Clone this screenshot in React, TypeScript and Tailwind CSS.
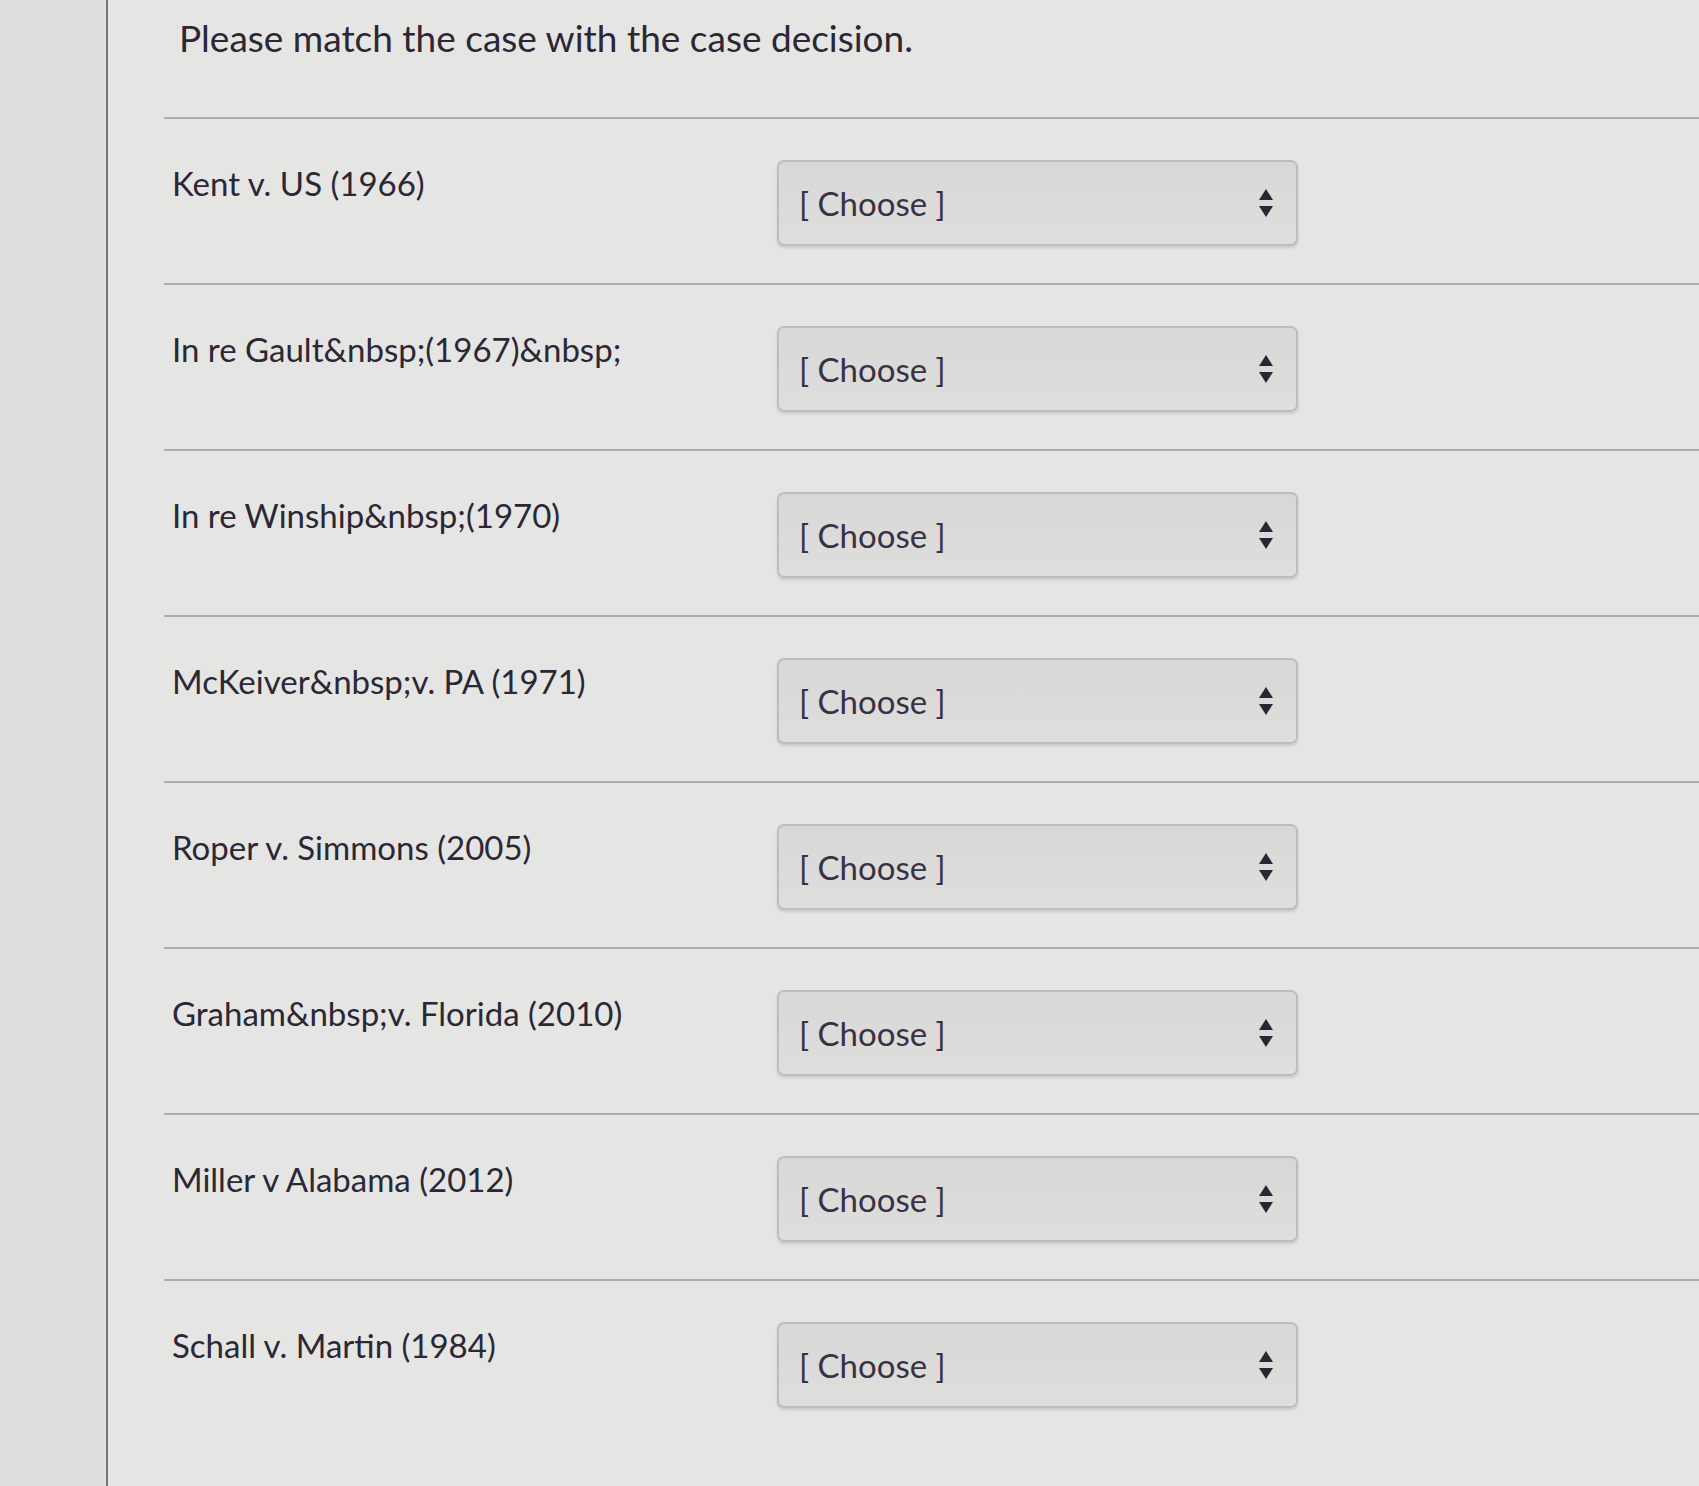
import React from "react";

const rows = [
  "Kent v. US (1966)",
  "In re Gault&nbsp;(1967)&nbsp;",
  "In re Winship&nbsp;(1970)",
  "McKeiver&nbsp;v. PA (1971)",
  "Roper v. Simmons (2005)",
  "Graham&nbsp;v. Florida (2010)",
  "Miller v Alabama (2012)",
  "Schall v. Martin (1984)",
];

function Arrows() {
  return (
    <svg width="16" height="30" viewBox="0 0 16 30" className="shrink-0">
      <path d="M8 1 L15 12 L1 12 Z" fill="#2a2734" />
      <path d="M1 18 L15 18 L8 29 Z" fill="#2a2734" />
    </svg>
  );
}

export default function App() {
  return (
    <div
      className="min-h-screen w-full flex bg-[#e5e5e3] text-[#2b2735]"
      style={{ fontFamily: "Lato, 'Open Sans', sans-serif" }}
    >
      <div className="w-[108px] shrink-0 bg-[#dedede] border-r-2 border-[#74747a]" />
      <div className="flex-1 pl-[56px] overflow-hidden">
        <h1 className="h-[117px] pt-[16px] pl-[15px] text-[37px] leading-[44px] font-normal">
          Please match the case with the case decision.
        </h1>
        {rows.map((r, i) => (
          <div key={i} className="h-[166px] border-t-2 border-[#aeaeae] flex">
            <div className="w-[613px] shrink-0 pt-[44px] pl-[8px] text-[33px] leading-[40px]">
              {r}
            </div>
            <div className="mt-[41px] w-[521px] h-[86px] rounded-[7px] border-2 border-[#bdbdbd] bg-gradient-to-b from-[#d8d8d7] to-[#dededd] shadow-[0_2px_3px_rgba(0,0,0,0.12)] flex items-center justify-between pl-[20px] pr-[22px]">
              <span className="text-[33px] leading-[40px] text-[#3a3145]">[ Choose ]</span>
              <Arrows />
            </div>
          </div>
        ))}
      </div>
    </div>
  );
}
